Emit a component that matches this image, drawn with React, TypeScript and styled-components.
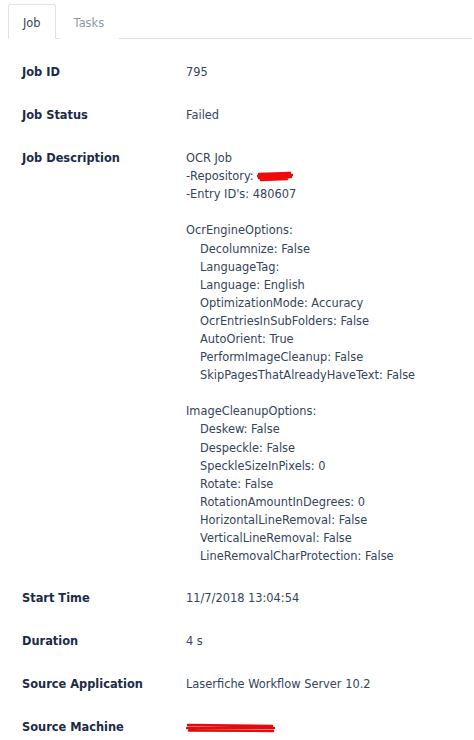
import React from "react";
import styled, { createGlobalStyle } from "styled-components";

const GlobalStyle = createGlobalStyle`
  html, body {
    margin: 0;
    padding: 0;
    background: #ffffff;
  }
  body {
    font-family: "DejaVu Sans", Verdana, sans-serif;
    font-size: 11.4px;
    color: #34445a;
  }
`;

const Page = styled.div`
  width: 474px;
  padding-top: 4px;
`;

const TabBar = styled.div`
  display: flex;
  align-items: flex-end;
  gap: 3px;
  margin-left: 8px;
  margin-right: 2px;
  border-bottom: 1px solid #dedede;
`;

const Tab = styled.div<{ $active?: boolean }>`
  height: 35px;
  padding: 2px 14px 0;
  display: flex;
  align-items: center;
  margin-bottom: -1px;
  box-sizing: border-box;
  border: 1px solid ${(p) => (p.$active ? "#e2e2e2" : "transparent")};
  border-bottom-color: ${(p) => (p.$active ? "#ffffff" : "transparent")};
  border-radius: 3px 3px 0 0;
  background: #ffffff;
  color: ${(p) => (p.$active ? "#3a4656" : "#8d98a6")};
`;

const Details = styled.div`
  display: flex;
  flex-direction: column;
  gap: 25px;
  padding: 24px 0 0 22px;
`;

const Row = styled.div<{ $tight?: boolean }>`
  display: grid;
  grid-template-columns: 164px 1fr;
  line-height: 18px;
  margin-bottom: ${(p) => (p.$tight ? "-1px" : "0")};
`;

const Label = styled.div`
  font-weight: bold;
  color: #1b2b46;
`;

const Value = styled.div`
  color: #34445a;
  white-space: pre;
`;

const Line = styled.div<{ $indent?: boolean }>`
  height: 18.1px;
  padding-left: ${(p) => (p.$indent ? "14px" : "0")};
  display: flex;
  align-items: center;
`;

const Scribble = styled.svg`
  display: inline-block;
  vertical-align: middle;
`;

function RedactRepo() {
  return (
    <Scribble width="36" height="12" viewBox="0 0 36 12" aria-hidden>
      <path
        d="M2 4 L33 3 M1 6 L35 5 M2 8 L34 7 M4 10 L30 9"
        stroke="#ee0a0a"
        strokeWidth="2.6"
        strokeLinecap="round"
        fill="none"
      />
    </Scribble>
  );
}

function RedactMachine() {
  return (
    <Scribble width="90" height="12" viewBox="0 0 90 12" aria-hidden>
      <path
        d="M2 3 L86 4 M1 6 L88 6 M3 8.5 L87 9"
        stroke="#e60a0a"
        strokeWidth="2.4"
        strokeLinecap="round"
        fill="none"
      />
      <path
        d="M6 6 H84"
        stroke="#b02020"
        strokeWidth="0.8"
        strokeDasharray="2 1.5"
        fill="none"
      />
    </Scribble>
  );
}

const ocrOptions = [
  "Decolumnize: False",
  "LanguageTag:",
  "Language: English",
  "OptimizationMode: Accuracy",
  "OcrEntriesInSubFolders: False",
  "AutoOrient: True",
  "PerformImageCleanup: False",
  "SkipPagesThatAlreadyHaveText: False",
];

const cleanupOptions = [
  "Deskew: False",
  "Despeckle: False",
  "SpeckleSizeInPixels: 0",
  "Rotate: False",
  "RotationAmountInDegrees: 0",
  "HorizontalLineRemoval: False",
  "VerticalLineRemoval: False",
  "LineRemovalCharProtection: False",
];

export default function App() {
  return (
    <Page>
      <GlobalStyle />
      <TabBar>
        <Tab $active>Job</Tab>
        <Tab>Tasks</Tab>
      </TabBar>
      <Details>
        <Row>
          <Label>Job ID</Label>
          <Value>795</Value>
        </Row>
        <Row>
          <Label>Job Status</Label>
          <Value>Failed</Value>
        </Row>
        <Row $tight>
          <Label>Job Description</Label>
          <Value>
            <Line>OCR Job</Line>
            <Line>
              -Repository:&nbsp;
              <RedactRepo />
            </Line>
            <Line>-Entry ID's: 480607</Line>
            <Line />
            <Line>OcrEngineOptions:</Line>
            {ocrOptions.map((o) => (
              <Line key={o} $indent>
                {o}
              </Line>
            ))}
            <Line />
            <Line>ImageCleanupOptions:</Line>
            {cleanupOptions.map((o) => (
              <Line key={o} $indent>
                {o}
              </Line>
            ))}
          </Value>
        </Row>
        <Row>
          <Label>Start Time</Label>
          <Value>11/7/2018 13:04:54</Value>
        </Row>
        <Row>
          <Label>Duration</Label>
          <Value>4 s</Value>
        </Row>
        <Row>
          <Label>Source Application</Label>
          <Value>Laserfiche Workflow Server 10.2</Value>
        </Row>
        <Row>
          <Label>Source Machine</Label>
          <Value>
            <RedactMachine />
          </Value>
        </Row>
      </Details>
    </Page>
  );
}
